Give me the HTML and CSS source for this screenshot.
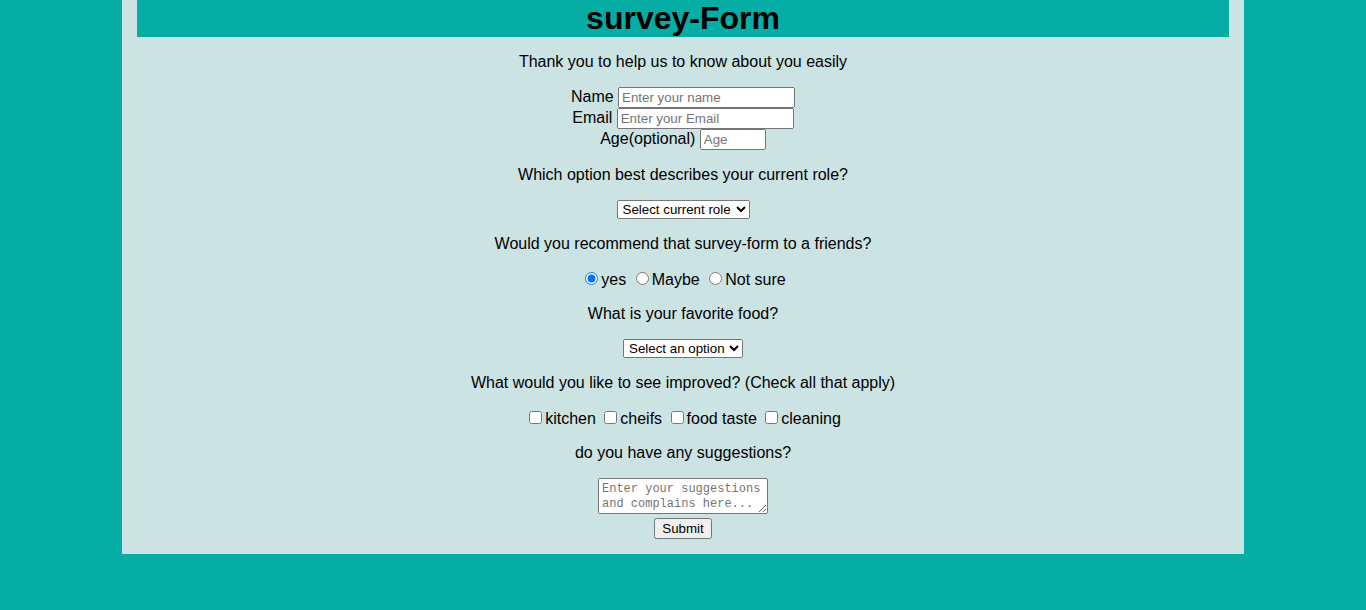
FILE: index.html
```html
<!DOCTYPE html>
<html lang="en">
<head>
<meta charset="utf-8">
<title>survey-Form</title>
<link rel="stylesheet" href="styles.css">
</head>
<body>
<div class="page">
  <header class="banner"><h1 class="title">survey-Form</h1></header>
  <form class="survey">
    <p>Thank you to help us to know about you easily</p>
    <p class="fields">
      <label for="name">Name</label> <input class="text" id="name" type="text" placeholder="Enter your name"><br>
      <label for="email">Email</label> <input class="text" id="email" type="email" placeholder="Enter your Email"><br>
      <label for="age">Age(optional)</label> <input class="text age" id="age" type="text" placeholder="Age">
    </p>
    <p>Which option best describes your current role?</p>
    <p class="ctl">
      <select class="sel">
        <option>Select current role</option>
        <option>Student</option>
        <option>Full Time Job</option>
        <option>Other</option>
      </select>
    </p>
    <p>Would you recommend that survey-form to a friends?</p>
    <p>
      <input type="radio" name="rec" id="r1" checked><label for="r1">yes</label>
      <input type="radio" name="rec" id="r2"><label for="r2">Maybe</label>
      <input type="radio" name="rec" id="r3"><label for="r3">Not sure</label>
    </p>
    <p>What is your favorite food?</p>
    <p class="ctl">
      <select class="sel">
        <option>Select an option</option>
        <option>Pizza</option>
        <option>Burger</option>
      </select>
    </p>
    <p>What would you like to see improved? (Check all that apply)</p>
    <p>
      <input type="checkbox" id="c1"><label for="c1">kitchen</label>
      <input type="checkbox" id="c2"><label for="c2">cheifs</label>
      <input type="checkbox" id="c3"><label for="c3">food taste</label>
      <input type="checkbox" id="c4"><label for="c4">cleaning</label>
    </p>
    <p>do you have any suggestions?</p>
    <p class="last">
      <textarea class="area" placeholder="Enter your suggestions and complains here..."></textarea><br>
      <button class="btn" type="button">Submit</button>
    </p>
  </form>
</div>
</body>
</html>
```
FILE: styles.css
```css
html, body {
  margin: 0;
  padding: 0;
}
body {
  background: #06ada5;
  font-family: "Liberation Sans", Arial, sans-serif;
  font-size: 16px;
  color: #000;
}
.page {
  width: 1122px;
  margin: 0 auto;
  padding: 0 15px;
  box-sizing: border-box;
  background: #cce3e3;
  display: flow-root;
}
.banner {
  background: #06ada5;
}
.title {
  margin: 0;
  font-size: 32px;
  font-weight: bold;
  text-align: center;
  line-height: 37px;
}
.survey {
  text-align: center;
  display: flow-root;
}
.survey p {
  margin: 16px 0;
}
.survey p.last {
  margin-bottom: 15px;
}
input, select, button {
  font-family: "Liberation Sans", Arial, sans-serif;
  font-size: 13.333px;
}
.text {
  box-sizing: border-box;
  width: 177px;
  height: 21px;
}
.text.age {
  width: 66px;
}
.sel {
  height: 19px;
  padding: 0 1px;
}
.area {
  box-sizing: border-box;
  width: 170px;
  height: 36px;
  padding: 3px 3px 1px;
  font-family: "Liberation Mono", "DejaVu Sans Mono", monospace;
  font-size: 12px;
  line-height: 15px;
  margin: 0;
  vertical-align: baseline;
  overflow: hidden;
  resize: both;
}
.btn {
  height: 21px;
}
```
